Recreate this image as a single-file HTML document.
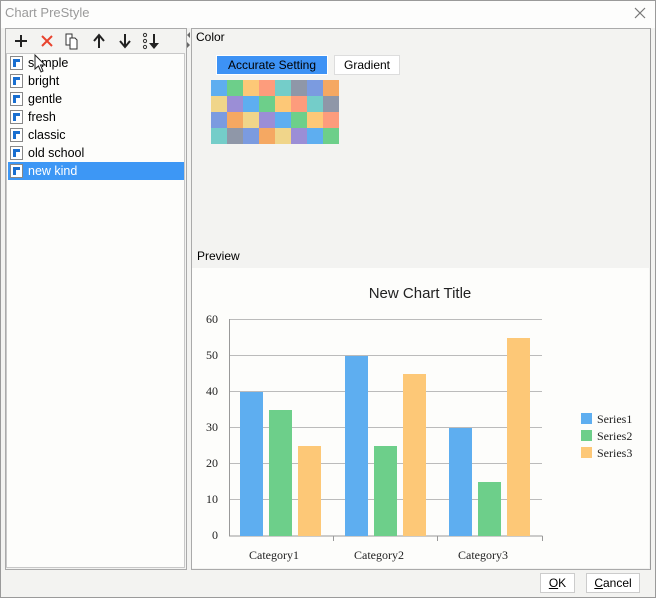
<!DOCTYPE html>
<html><head><style>
*{margin:0;padding:0;box-sizing:border-box}
body{width:656px;height:598px;background:#f3f3f1;position:relative;font-family:"Liberation Sans",sans-serif;font-size:12px;color:#000;overflow:hidden}
.a{position:absolute}
.item{position:absolute;left:8px;width:176px;height:18px;line-height:18px;font-size:12.5px}
.item span{position:absolute;left:20px;top:0}
.ic{position:absolute;left:2px;top:2px;width:13px;height:14px;border:1px solid #888;background:#fff}
.ic i{position:absolute;left:2px;top:2px;width:7px;height:8px;background:#1a6fd0}
.ic b{position:absolute;left:5px;top:5px;width:4px;height:5px;background:#fff}
.cell{position:absolute;width:16px;height:16px}
</style></head><body>
<div class="a" style="left:0;top:0;width:656px;height:598px;border:1px solid #9a9a9a"></div>
<div class="a" style="left:1px;top:1px;width:654px;height:27px;background:#fdfdfc"></div>
<div class="a" style="left:5px;top:5px;color:#9a9a9a;font-size:13px">Chart PreStyle</div>
<svg class="a" style="left:633px;top:6px" width="14" height="14"><path d="M2 2L12 12M12 2L2 12" stroke="#777" stroke-width="1.2"/></svg>

<div class="a" style="left:5px;top:28px;width:182px;height:542px;border:1px solid #aaa;background:#f3f3f1"></div>
<div class="a" style="left:6px;top:53px;width:179px;height:515px;background:#fdfdfb;border:1px solid #c8c8c8"></div>
<svg class="a" style="left:8px;top:31px" width="170" height="20">
<path d="M7 10H19M13 4V16" stroke="#222" stroke-width="2"/>
<path d="M34 5L44 15M44 5L34 15" stroke="#e8432e" stroke-width="2"/>
<path d="M58 3h6v11h-6z" fill="#fff" stroke="#333"/><path d="M62 7h5l2 2v9h-7z" fill="#fff" stroke="#333"/>
<path d="M91 17V5M86 10L91 4L96 10" stroke="#222" stroke-width="2" fill="none"/>
<path d="M117 3V15M112 10L117 16L122 10" stroke="#222" stroke-width="2" fill="none"/>
<circle cx="137" cy="4" r="1.6" fill="none" stroke="#333"/><circle cx="137" cy="10" r="1.6" fill="none" stroke="#333"/><circle cx="137" cy="16" r="1.6" fill="none" stroke="#333"/>
<path d="M145 3V12H141L146 18L151 12H147V3z" fill="#222"/>
</svg>
<div class="item" style="top:54px"><div class="ic"><i></i><b></b></div><span>sample</span></div>
<div class="item" style="top:72px"><div class="ic"><i></i><b></b></div><span>bright</span></div>
<div class="item" style="top:90px"><div class="ic"><i></i><b></b></div><span>gentle</span></div>
<div class="item" style="top:108px"><div class="ic"><i></i><b></b></div><span>fresh</span></div>
<div class="item" style="top:126px"><div class="ic"><i></i><b></b></div><span>classic</span></div>
<div class="item" style="top:144px"><div class="ic"><i></i><b></b></div><span>old school</span></div>
<div class="item" style="top:162px;background:#3d97f5;color:#fff"><div class="ic"><i></i><b></b></div><span>new kind</span></div>
<svg class="a" style="left:34px;top:54px" width="14" height="20"><path d="M1 1V15L4.5 12L7 18L9 17L6.5 11H11z" fill="#fff" stroke="#222"/></svg>

<svg class="a" style="left:186px;top:30px" width="5" height="20"><path d="M4 2L1 5L4 8z M1 12L4 15L1 18z" fill="#666"/></svg>

<div class="a" style="left:191px;top:28px;width:460px;height:542px;border:1px solid #aaa;border-right-color:#999"></div>
<div class="a" style="left:196px;top:30px">Color</div>
<div class="a" style="left:216px;top:55px;width:112px;height:20px;background:#3d92f5;border:1px solid #fff;line-height:18px;text-align:center">Accurate Setting</div>
<div class="a" style="left:334px;top:55px;width:66px;height:20px;background:#fff;border:1px solid #ddd;line-height:18px;text-align:center">Gradient</div>
<div class="a" style="left:211px;top:80px;width:128px;height:64px" id="g"></div>
<div class="a" style="left:197px;top:249px">Preview</div>
<div class="a" style="left:192px;top:268px;width:457px;height:300px;background:#fdfdfb"></div>

<svg class="a" style="left:192px;top:268px" width="457" height="300" font-family="Liberation Serif,serif" font-size="12">
<text x="228" y="30" text-anchor="middle" font-family="Liberation Sans,sans-serif" font-size="15" fill="#222">New Chart Title</text>
<g stroke="#bbb" stroke-width="1">
<path d="M37 51.5H350M37 87.5H350M37 123.5H350M37 159.5H350M37 195.5H350M37 231.5H350"/>
</g>
<path d="M37.5 51V268H350.5M141.5 268V273M245.5 268V273M350.5 268V273" stroke="#999" fill="none"/>
<g text-anchor="end" fill="#222"><text x="26" y="55">60</text><text x="26" y="91">50</text><text x="26" y="127">40</text><text x="26" y="163">30</text><text x="26" y="199">20</text><text x="26" y="235">10</text><text x="26" y="271">0</text></g>
<g fill="#5eaef0"><rect x="48" y="124" width="23" height="144"/><rect x="153" y="88" width="23" height="180"/><rect x="257" y="160" width="23" height="108"/></g>
<g fill="#6dcf8a"><rect x="77" y="142" width="23" height="126"/><rect x="182" y="178" width="23" height="90"/><rect x="286" y="214" width="23" height="54"/></g>
<g fill="#fdc877"><rect x="106" y="178" width="23" height="90"/><rect x="211" y="106" width="23" height="162"/><rect x="315" y="70" width="23" height="198"/></g>
<g text-anchor="middle" fill="#222"><text x="82" y="291">Category1</text><text x="187" y="291">Category2</text><text x="291" y="291">Category3</text></g>
<rect x="389" y="145" width="11" height="11" fill="#5eaef0"/><rect x="389" y="162" width="11" height="11" fill="#6dcf8a"/><rect x="389" y="179" width="11" height="11" fill="#fdc877"/>
<g fill="#222"><text x="405" y="155">Series1</text><text x="405" y="172">Series2</text><text x="405" y="189">Series3</text></g>
</svg>

<div class="a" style="left:540px;top:573px;width:35px;height:20px;background:#fff;border:1px solid #ccc;text-align:center;line-height:18px"><u>O</u>K</div>
<div class="a" style="left:586px;top:573px;width:54px;height:20px;background:#fff;border:1px solid #ccc;text-align:center;line-height:18px"><u>C</u>ancel</div>

<script>
var c={B:"#5eaef0",G:"#6dcf8a",Y:"#fdc877",S:"#fd9c7c",T:"#74cdc9",R:"#8f97a8",P:"#7b9be0",O:"#f5a862",L:"#f0d58a",U:"#9b8ed6"};
var rows=["BGYSTRPO","LUBGYSTR","POLUBGYS","TRPOLUBG"],h="";
rows.forEach(function(r,i){for(var j=0;j<8;j++)h+='<div class="cell" style="left:'+j*16+'px;top:'+i*16+'px;background:'+c[r[j]]+'"></div>';});
document.getElementById("g").innerHTML=h;
</script>
</body></html>
